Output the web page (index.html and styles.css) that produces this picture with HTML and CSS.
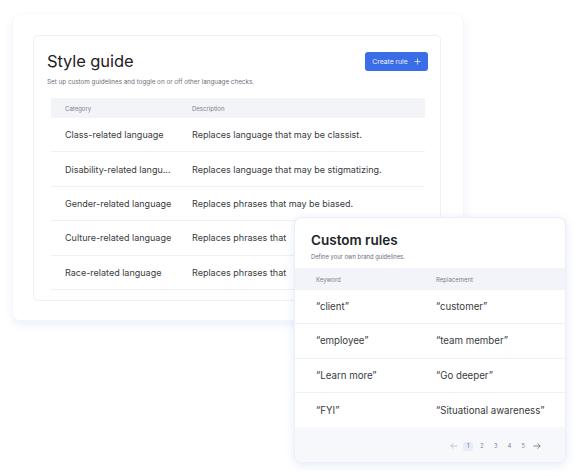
FILE: index.html
```html
<!DOCTYPE html>
<html lang="en">
<head>
<meta charset="utf-8">
<title>Style guide</title>
<link rel="stylesheet" href="styles.css">
</head>
<body>
<div class="stage">
  <section class="panel">
    <div class="card">
      <div class="card-head">
        <div class="titles">
          <h1 class="title">Style guide</h1>
          <p class="subtitle">Set up custom guidelines and toggle on or off other language checks.</p>
        </div>
        <button class="btn">Create rule
          <svg class="plus" viewBox="0 0 8 8" width="7" height="7"><path d="M4 0.5V7.5M0.5 4H7.5" stroke="#fff" stroke-width="0.8" fill="none"/></svg>
        </button>
      </div>
      <div class="table">
        <div class="thead">
          <span class="c1">Category</span><span class="c2">Description</span>
        </div>
        <div class="row"><span class="c1">Class-related language</span><span class="c2">Replaces language that may be classist.</span></div>
        <div class="row"><span class="c1">Disability-related langu...</span><span class="c2">Replaces language that may be stigmatizing.</span></div>
        <div class="row"><span class="c1">Gender-related language</span><span class="c2">Replaces phrases that may be biased.</span></div>
        <div class="row"><span class="c1">Culture-related language</span><span class="c2">Replaces phrases that</span></div>
        <div class="row"><span class="c1">Race-related language</span><span class="c2">Replaces phrases that</span></div>
      </div>
    </div>
  </section>

  <section class="rules">
    <h2 class="rules-title">Custom rules</h2>
    <p class="rules-sub">Define your own brand guidelines.</p>
    <div class="rhead"><span class="k">Keyword</span><span class="v">Replacement</span></div>
    <div class="rrow"><span class="k">“client”</span><span class="v">“customer”</span></div>
    <div class="rrow"><span class="k">“employee”</span><span class="v">“team member”</span></div>
    <div class="rrow"><span class="k">“Learn more”</span><span class="v">“Go deeper”</span></div>
    <div class="rrow last"><span class="k">“FYI”</span><span class="v">“Situational awareness”</span></div>
    <div class="rfoot">
      <nav class="pager">
        <svg class="arrow" viewBox="0 0 8 8" width="8" height="8"><path d="M7.5 4H0.8M3.5 1.3 0.8 4 3.5 6.7" stroke="#b4b7c0" stroke-width="0.7" fill="none"/></svg>
        <span class="pg active">1</span>
        <span class="pg">2</span>
        <span class="pg">3</span>
        <span class="pg">4</span>
        <span class="pg">5</span>
        <svg class="arrow" viewBox="0 0 8 8" width="8" height="8"><path d="M0.5 4H7.2M4.5 1.3 7.2 4 4.5 6.7" stroke="#555a66" stroke-width="0.7" fill="none"/></svg>
      </nav>
    </div>
  </section>
</div>
</body>
</html>
```

FILE: styles.css
```css
* { box-sizing: border-box; }
html, body {
  margin: 0;
  padding: 0;
  background: #ffffff;
  font-family: Inter, "Noto Sans", "Liberation Sans", sans-serif;
  color: #2a2b2f;
}
.stage {
  position: relative;
  width: 575px;
  height: 476px;
  padding: 14px 0 0 12px;
}
.panel {
  width: 452px;
  height: 307px;
  background: #fff;
  border: 1px solid #f5f6fb;
  border-top-color: #fefeff;
  border-radius: 8px;
  box-shadow: 0 4px 9px rgba(70, 100, 220, 0.09);
  padding: 20px 23px 0 20px;
}
.card {
  width: 408px;
  height: 266px;
  border: 1px solid #eff0f4;
  border-radius: 5px;
  padding: 15px 12px 0 13px;
  display: flex;
  flex-direction: column;
}
.card-head {
  display: flex;
  justify-content: space-between;
  align-items: flex-start;
}
.title {
  margin: 0;
  font-size: 16.5px;
  line-height: 20px;
  font-weight: 400;
  color: #1f2024;
  letter-spacing: -0.1px;
}
.subtitle {
  margin: 7px 0 0;
  font-size: 6.3px;
  line-height: 8px;
  color: #6b6e76;
}
.btn {
  margin-top: 1px;
  width: 63px;
  height: 19px;
  border: none;
  border-radius: 3px;
  background: #3b6de6;
  color: #eef2ff;
  font-family: inherit;
  font-size: 6.8px;
  display: flex;
  align-items: center;
  justify-content: center;
  gap: 6px;
  padding: 0 0 0 0;
}
.plus { display: block; }
.table {
  margin: 12px 3px 0 4px;
}
.thead {
  height: 20px;
  background: #f3f4f8;
  display: flex;
  align-items: center;
  font-size: 6px;
  color: #7d8089;
}
.row {
  height: 34.4px;
  border-bottom: 1px solid #eff0f3;
  display: flex;
  align-items: center;
  font-size: 9px;
  color: #393b40;
  white-space: nowrap;
}
.c1 { width: 141px; padding-left: 14px; flex: none; }
.c2 { flex: 1; }

.rules {
  position: absolute;
  left: 294px;
  top: 217px;
  width: 272px;
  height: 246px;
  background: #fff;
  border: 1px solid #eceef8;
  border-radius: 8px;
  box-shadow: 0 2px 10px rgba(70, 100, 220, 0.14);
  overflow: hidden;
  padding-top: 14px;
}
.rules-title {
  margin: 0 0 0 16px;
  font-size: 13.5px;
  line-height: 17px;
  font-weight: 600;
  color: #222327;
}
.rules-sub {
  margin: 4px 0 0 16px;
  font-size: 5.8px;
  line-height: 8px;
  color: #6b6e76;
}
.rhead {
  margin-top: 7px;
  height: 22px;
  background: #f3f4f9;
  display: flex;
  align-items: center;
  font-size: 6px;
  color: #7d8089;
}
.rrow {
  height: 34.3px;
  border-bottom: 1px solid #eff0f4;
  display: flex;
  align-items: center;
  font-size: 9.7px;
  color: #393b40;
  white-space: nowrap;
}
.rrow.last { border-bottom: none; }
.k { width: 141px; padding-left: 21px; flex: none; }
.v { flex: 1; }
.rfoot {
  height: 37px;
  background: #f7f8fc;
  display: flex;
  align-items: center;
  justify-content: flex-end;
  padding-right: 24px;
}
.pager {
  display: flex;
  align-items: center;
  gap: 3.8px;
  margin-top: 1px;
}
.arrow { display: block; }
.pager .arrow:first-child { margin-right: 1.5px; }
.pager .arrow:last-child { margin-left: 1px; }
.pg {
  width: 10px;
  height: 9px;
  display: flex;
  align-items: center;
  justify-content: center;
  font-size: 5.5px;
  color: #7a7d86;
  border-radius: 2px;
}
.pg.active {
  background: #e9ecf4;
  color: #3b6de6;
}
```
